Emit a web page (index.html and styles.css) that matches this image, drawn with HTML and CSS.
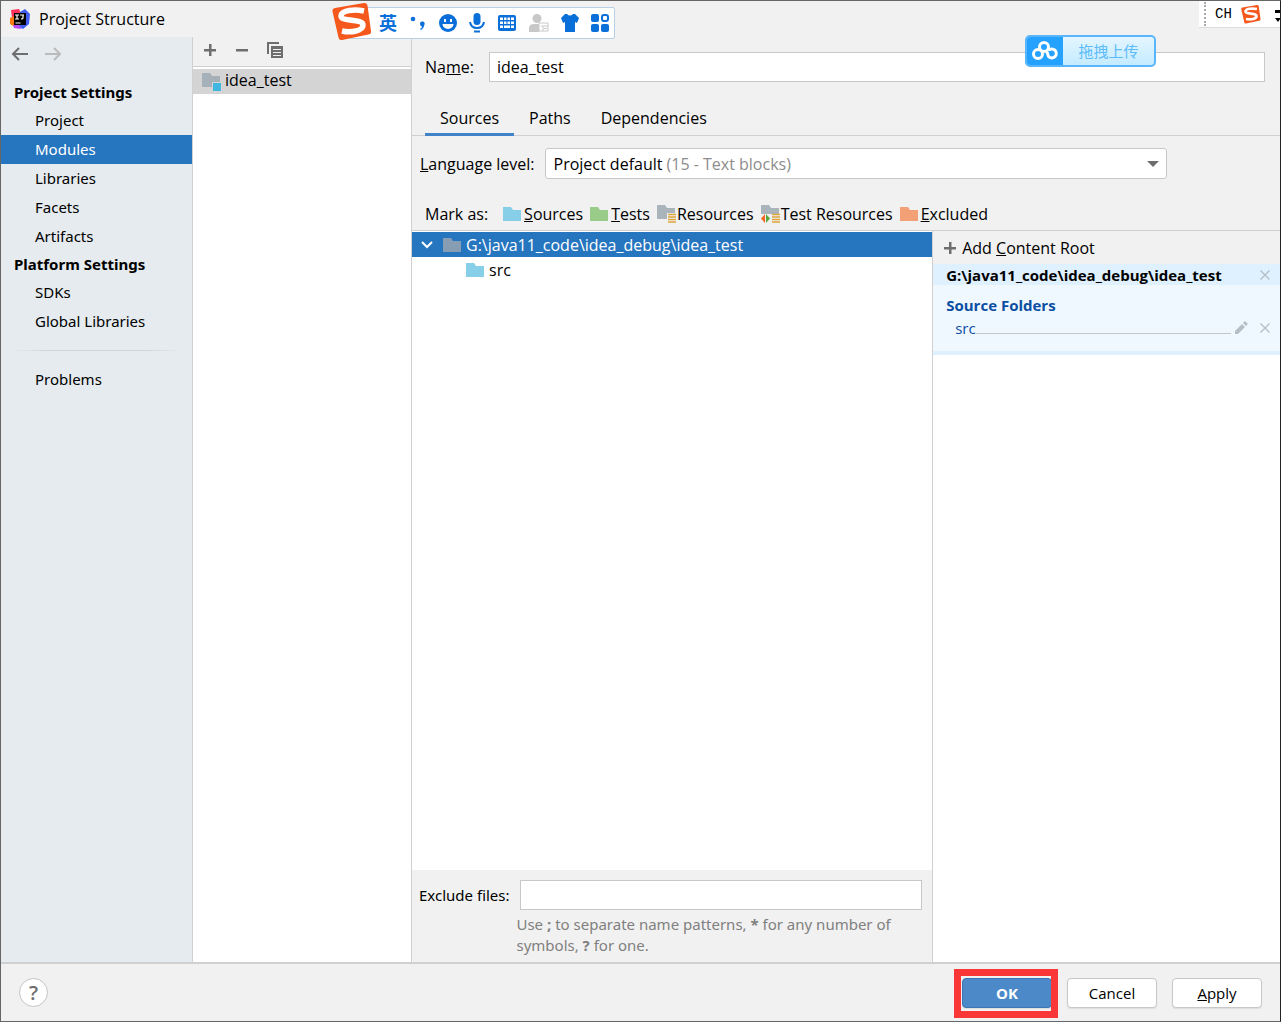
FILE: index.html
```html
<!DOCTYPE html>
<html lang="en">
<head>
  <meta charset="UTF-8" />
  <meta name="viewport" content="width=device-width, initial-scale=1.0" />
  <title>Project Structure</title>
  <link rel="stylesheet" href="styles.css">
</head>
<body>

  <!-- Shared icons -->
  <svg class="sprite" aria-hidden="true">
    <symbol id="folder" viewBox="0 0 18 14"><path d="M0 0h8l2 3h8v11H0z"/></symbol>
    <symbol id="plus" viewBox="0 0 14 14"><path d="M6 1h2.500v5H13v2.500H8.500V13H6V8.500H1V6h5z"/></symbol>
    <symbol id="cross" viewBox="0 0 10 10"><path d="M.5.5l9 9M9.500.5l-9 9" fill="none" stroke="currentColor" stroke-width="1.300"/></symbol>
    <symbol id="arrow" viewBox="0 0 18 14"><path d="M17 7H2M8 1L2 7l6 6" fill="none" stroke="currentColor" stroke-width="2"/></symbol>
    <symbol id="sogou" viewBox="0 0 40 40">
      <path d="M3 7L32 2q3-.5 3.500 2.500L39 30q.5 3-2.500 3.500L10 39q-3 .5-3.500-2.500L.5 10.500Q0 7.500 3 7z" fill="#f4581c"/>
      <path d="M32 10c-9-2-23-1-23 5 0 6 22 2.500 22 9 0 6-12 8-21 6" fill="none" stroke="#fff" stroke-width="5.500"/>
    </symbol>
  </svg>

  <div class="window">
    <header class="titlebar">
      <svg class="logo" viewBox="0 0 20 20" aria-hidden="true">
        <path d="M1 1l8-1 4 9-8 9-5-5 2-4z" fill="#fe315d"/>
        <path d="M0 9l4-2 3 7-4 3-3-2z" fill="#f97a12"/>
        <path d="M10 3l5-3 5 5-1 10-6 5-8-4z" fill="#3f5df5"/>
        <path d="M3 16l6-1 2 5-7-1z" fill="#b74af7"/>
        <path d="M4 4h12v12H4z" fill="#000"/>
        <path d="M5 6h4M7 6v4M5 10h4M10 6h4M13 6v3q0 1-2 1M5.500 14h5" fill="none" stroke="#fff" stroke-width="1.200"/>
      </svg>
      <span>Project Structure</span>
    </header>

    <div class="content">
      <!-- Settings list -->
      <nav class="sidebar">
        <div class="history">
          <button class="icon-btn" aria-label="Back"><svg width="18" height="14"><use href="#arrow"/></svg></button>
          <button class="icon-btn forward" aria-label="Forward" disabled><svg width="18" height="14" viewBox="0 0 18 14"><path d="M1 7h15M10 1l6 6-6 6" fill="none" stroke="currentColor" stroke-width="2"/></svg></button>
        </div>
        <h2>Project Settings</h2>
        <ul>
          <li><a href="#">Project</a></li>
          <li><a href="#" class="active">Modules</a></li>
          <li><a href="#">Libraries</a></li>
          <li><a href="#">Facets</a></li>
          <li><a href="#">Artifacts</a></li>
        </ul>
        <h2>Platform Settings</h2>
        <ul>
          <li><a href="#">SDKs</a></li>
          <li><a href="#">Global Libraries</a></li>
        </ul>
        <hr>
        <ul>
          <li><a href="#">Problems</a></li>
        </ul>
      </nav>

      <!-- Module list -->
      <section class="modules">
        <div class="toolbar">
          <button class="icon-btn" aria-label="Add"><svg width="14" height="14"><use href="#plus"/></svg></button>
          <button class="icon-btn" aria-label="Remove"><svg width="14" height="14" viewBox="0 0 14 14"><path d="M1 6h12v2.500H1z"/></svg></button>
          <button class="icon-btn" aria-label="Copy"><svg width="16" height="16" viewBox="0 0 16 16"><path d="M0 0h12v2H2v10H0z"/><path d="M4 4h12v12H4z"/><path d="M6 7.500h8M6 10.500h8M6 13.500h8" stroke="#f1f1f1" stroke-width="1"/></svg></button>
        </div>
        <a href="#" class="module">
          <svg width="20" height="18" viewBox="0 0 20 18" aria-hidden="true"><path d="M0 0h8l2 3h8v11H0z" fill="#a5b0b8"/><path d="M10 9h10v9H10z" fill="#d4d4d4"/><path d="M11 10h8v8h-8z" fill="#40b6e0"/></svg>
          <span>idea_test</span>
        </a>
      </section>

      <!-- Module editor -->
      <main class="editor">
        <div class="name-row">
          <label for="name">Na<u>m</u>e:</label>
          <input type="text" id="name" value="idea_test">
        </div>

        <div class="tabs" role="tablist">
          <button role="tab" class="tab selected" aria-selected="true">Sources</button>
          <button role="tab" class="tab" aria-selected="false">Paths</button>
          <button role="tab" class="tab" aria-selected="false">Dependencies</button>
        </div>

        <div class="level-row">
          <label for="level"><u>L</u>anguage level:</label>
          <div class="combo">
            <select id="level">
              <option>Project default</option>
            </select>
            <span class="hint">(15 - Text blocks)</span>
            <svg class="caret" width="12" height="6" viewBox="0 0 12 6" aria-hidden="true"><path d="M0 0h12L6 6z"/></svg>
          </div>
        </div>

        <div class="mark-row">
          <span class="mark-label">Mark as:</span>
          <button class="mark"><svg class="blue" width="18" height="14"><use href="#folder"/></svg><span><u>S</u>ources</span></button>
          <button class="mark"><svg class="green" width="18" height="14"><use href="#folder"/></svg><span><u>T</u>ests</span></button>
          <button class="mark tight"><svg width="20" height="18" viewBox="0 0 20 18"><path d="M0 0h8l2 3h8v11H0z" fill="#a9b4bb"/><path d="M10 8h10v10H10z" fill="#f1f1f1"/><path d="M11 9.500h8M11 12h8M11 14.500h8M11 17h8" stroke="#dda740" stroke-width="1.500"/></svg><span>Resources</span></button>
          <button class="mark tight"><svg width="20" height="18" viewBox="0 0 20 18"><path d="M0 0h8l2 3h8v11H0z" fill="#a9b4bb"/><path d="M0 9h20v9H0z" fill="#f1f1f1"/><path d="M4 9v9L0 13.500z" fill="#f26522"/><path d="M5 9v9l4-4.500z" fill="#59a83c"/><path d="M11 9.500h8M11 12h8M11 14.500h8M11 17h8" stroke="#dda740" stroke-width="1.500"/></svg><span>Test Resources</span></button>
          <button class="mark"><svg class="orange" width="18" height="14"><use href="#folder"/></svg><span><u>E</u>xcluded</span></button>
        </div>

        <div class="roots">
          <div class="tree-pane">
            <ul class="tree">
              <li class="root">
                <svg width="12" height="8" viewBox="0 0 12 8" aria-hidden="true"><path d="M1 1l5 5 5-5" fill="none" stroke="#fff" stroke-width="2"/></svg>
                <svg class="grey" width="18" height="14" aria-hidden="true"><use href="#folder"/></svg>
                <span>G:\java11_code\idea_debug\idea_test</span>
              </li>
              <li class="child">
                <svg class="blue" width="18" height="14" aria-hidden="true"><use href="#folder"/></svg>
                <span>src</span>
              </li>
            </ul>
            <div class="exclude">
              <label for="exclude">Exclude files:</label>
              <input type="text" id="exclude">
              <p>Use <b>;</b> to separate name patterns, <b>*</b> for any number of symbols, <b>?</b> for one.</p>
            </div>
          </div>

          <aside class="root-pane">
            <button class="add-root"><svg width="14" height="14"><use href="#plus"/></svg><span>Add <u>C</u>ontent Root</span></button>
            <div class="root-head">
              <strong>G:\java11_code\idea_debug\idea_test</strong>
              <button class="small-btn" aria-label="Remove content root"><svg width="10" height="10"><use href="#cross"/></svg></button>
            </div>
            <div class="folders">
              <h3>Source Folders</h3>
              <div class="folder">
                <a href="#">src</a>
                <span class="line"></span>
                <button class="small-btn" aria-label="Edit properties"><svg width="14" height="14" viewBox="0 0 14 14"><path d="M1 10l7-7 3 3-7 7H1zM9 2l1.500-1.500q.5-.5 1 0l2 2q.5.5 0 1L12 5z" fill="currentColor"/></svg></button>
                <button class="small-btn" aria-label="Remove source folder"><svg width="10" height="10"><use href="#cross"/></svg></button>
              </div>
            </div>
          </aside>
        </div>
      </main>
    </div>

    <footer class="footer">
      <button class="help" aria-label="Help">?</button>
      <div class="actions">
        <button class="btn primary">OK</button>
        <button class="btn">Cancel</button>
        <button class="btn"><u>A</u>pply</button>
      </div>
    </footer>

    <!-- Input method bar -->
    <div class="ime">
      <svg class="ime-logo" width="40" height="40" aria-hidden="true"><use href="#sogou"/></svg>
      <span class="ime-lang">英</span>
      <svg width="18" height="16" viewBox="0 0 18 16"><circle cx="4" cy="4" r="2.300"/><path d="M11 9a2.300 2.300 0 1 1 4.500.5Q15 13 12 15l-1-1q2-1 2-2.500-2-.5-2-2.500z"/></svg>
      <svg width="18" height="18" viewBox="0 0 18 18"><circle cx="9" cy="9" r="9"/><path d="M5 5h2v3H5zM11 5h2v3h-2zM3.500 10h11a5.500 5 0 0 1-11 0z" fill="#fff"/></svg>
      <svg width="16" height="20" viewBox="0 0 16 20"><rect x="4.500" y="0" width="7" height="12" rx="3.500"/><path d="M1 9q1 6 7 6t7-6" fill="none" stroke="currentColor" stroke-width="2"/><path d="M5 17.500h6v2H5z"/></svg>
      <svg width="20" height="16" viewBox="0 0 20 16"><rect x="1" y="0" width="18" height="16" rx="2"/><path d="M3 2.500h3v2.500H3zM7 2.500h2.500v2.500H7zM10.500 2.500H13v2.500h-2.500zM14 2.500h3v2.500h-3zM3 6.500h3v2.500H3zM7 6.500h2.500v2.500H7zM10.500 6.500H13v2.500h-2.500zM14 6.500h3v2.500h-3zM3 10.500h3V13H3zM7 10.500h6V13H7zM14 10.500h3V13h-3z" fill="#fff"/></svg>
      <svg class="ime-off" width="20" height="18" viewBox="0 0 20 18"><circle cx="8" cy="4.500" r="4.500"/><path d="M0 18v-4q0-4 5-4h5v8z"/><path d="M10 9h9v8h-9zM12 12h2v5M14 12h5M15 14.500h3" fill="#fff" stroke="currentColor"/></svg>
      <svg width="18" height="18" viewBox="1 0 18 18"><path d="M5 0h2q3 3 6 0h2l4 4-2 5-2-1v10H5V8L3 9 1 4z"/></svg>
      <svg width="18" height="18" viewBox="0 0 18 18"><rect x="0" y="0" width="8" height="8" rx="2"/><rect x="11" y="1" width="6" height="6" rx="2" fill="none" stroke="currentColor" stroke-width="2"/><rect x="0" y="10" width="8" height="8" rx="2"/><rect x="10" y="10" width="8" height="8" rx="2"/></svg>
    </div>

    <!-- Language bar -->
    <div class="langbar">
      <span class="grip"></span>
      <span class="lang">CH</span>
      <svg width="20" height="20" aria-hidden="true"><use href="#sogou"/></svg>
      <svg class="langbar-menu" width="6" height="12" viewBox="0 0 6 12" aria-hidden="true"><path d="M0 0h6v3H0zM0 8h6l-3 4z"/></svg>
    </div>

    <!-- Drag and drop upload -->
    <button class="upload">
      <span class="upload-icon"><svg width="26" height="22" viewBox="0 0 26 22" fill="none" stroke="#fff" stroke-width="3"><circle cx="12" cy="7" r="4.500"/><circle cx="6" cy="14" r="4.500"/><path d="M14.500 10.500l2 6a4.500 4.500 0 1 0 0-6.200"/></svg></span>
      <span class="upload-text">拖拽上传</span>
    </button>
  </div>

</body>
</html>
```
FILE: styles.css
```css
* {
  box-sizing: border-box;
}

body {
  margin: 0;
  background: #f1f1f1;
  color: #000;
  font-family: "Open Sans", "Noto Sans CJK SC", sans-serif;
  font-size: 16px;
  line-height: 20px;
}

button,
input,
select {
  font: inherit;
  color: inherit;
}

button {
  background: none;
  border: none;
  padding: 0;
  cursor: pointer;
}

a {
  color: inherit;
  text-decoration: none;
}

svg {
  display: block;
  flex: none;
}

ul {
  list-style: none;
  margin: 0;
  padding: 0;
}

.sprite {
  position: absolute;
  width: 0;
  height: 0;
}

.window {
  position: relative;
  display: flex;
  flex-direction: column;
  min-height: 100vh;
  border: 1px solid #666;
  border-right-color: #222;
  overflow: hidden;
}

.titlebar {
  display: flex;
  align-items: center;
  gap: 9px;
  height: 36px;
  padding-left: 9px;
}

.logo {
  width: 20px;
  height: 20px;
}

.content {
  flex: 1;
  display: flex;
}

/* Sidebar */
.sidebar {
  width: 192px;
  background: #e6ebef;
  border-right: 1px solid #d0d0d0;
  font-family: "Noto Sans", sans-serif;
  font-size: 15px;
}

.history {
  display: flex;
  align-items: center;
  gap: 15px;
  height: 34px;
  margin-bottom: 8px;
  padding-left: 10px;
}

.icon-btn {
  color: #6e6e6e;
  fill: #6e6e6e;
}

.icon-btn.forward {
  color: #bbb;
}

.sidebar h2 {
  margin: 0;
  padding-left: 13px;
  font-size: 15px;
  line-height: 27px;
}

.sidebar li a {
  display: block;
  padding-left: 34px;
  line-height: 29px;
}

.sidebar li a.active {
  background: #2675bf;
  color: #fff;
}

.sidebar hr {
  height: 1px;
  margin: 14px 10px;
  border: none;
  background: linear-gradient(to right, transparent, #d4d6d8 20%, #d4d6d8 80%, transparent);
}

/* Module list */
.modules {
  width: 219px;
  background: #fff;
  border-right: 1px solid #d0d0d0;
}

.toolbar {
  display: flex;
  align-items: center;
  gap: 18px;
  height: 30px;
  margin-bottom: 2px;
  padding: 0 10px 3px;
  background: #f1f1f1;
  border-bottom: 1px solid #d0d0d0;
}

.module {
  display: flex;
  align-items: center;
  gap: 3px;
  height: 25px;
  padding: 0 0 3px 9px;
  background: #d4d4d4;
}

.module svg {
  margin-top: 3px;
}

/* Editor */
.editor {
  flex: 1;
  display: flex;
  flex-direction: column;
  min-width: 0;
}

.name-row {
  display: flex;
  align-items: center;
  gap: 15px;
  padding: 15px 15px 0 13px;
}

input[type="text"] {
  flex: 1;
  min-width: 0;
  height: 30px;
  padding: 0 7px;
  background: #fff;
  border: 1px solid #c8c8c8;
  border-radius: 0;
}

.tabs {
  display: flex;
  margin-top: 21px;
  padding-left: 13px;
  border-bottom: 1px solid #d0d0d0;
}

.tab {
  height: 33px;
  margin-bottom: -1px;
  padding: 0 15px;
  border-bottom: 3px solid transparent;
}

.tab.selected {
  border-bottom-color: #4083c9;
}

.level-row {
  display: flex;
  align-items: center;
  gap: 10px;
  padding: 12px 113px 0 8px;
}

.combo {
  flex: 1;
  display: grid;
  align-items: center;
}

.combo > * {
  grid-area: 1 / 1;
}

.combo select {
  width: 100%;
  height: 31px;
  padding: 0 8px;
  appearance: none;
  background: #fff;
  border: 1px solid #c8c8c8;
  border-radius: 3px;
}

.hint {
  margin-left: 122px;
  color: #8c8c8c;
  pointer-events: none;
}

.caret {
  justify-self: end;
  margin-right: 8px;
  fill: #6e6e6e;
  pointer-events: none;
}

.mark-row {
  display: flex;
  align-items: center;
  gap: 7px;
  height: 52px;
  padding: 19px 0 0 13px;
  border-bottom: 1px solid #d0d0d0;
}

.mark-label {
  margin-right: 8px;
}

.mark {
  display: flex;
  align-items: center;
  gap: 3px;
}

.mark.tight {
  gap: 0;
}

.blue {
  fill: #87cfe8;
}

.green {
  fill: #99cc88;
}

.orange {
  fill: #f4a077;
}

.grey {
  fill: #869db3;
}

.roots {
  flex: 1;
  display: flex;
}

.tree-pane {
  flex: 3;
  display: flex;
  flex-direction: column;
  min-width: 0;
}

.tree {
  flex: 1;
  padding-top: 1px;
  background: #fff;
}

.tree li {
  display: flex;
  align-items: center;
  height: 25px;
}

.root {
  gap: 5px;
  padding-left: 9px;
  background: #2675bf;
  color: #fff;
}

.root .grey {
  margin-left: 5px;
}

.child {
  gap: 5px;
  padding-left: 54px;
}

.exclude {
  display: grid;
  grid-template-columns: auto 1fr;
  align-items: center;
  column-gap: 11px;
  padding: 10px 10px 6px 7px;
  font-family: "Noto Sans", sans-serif;
  font-size: 15px;
}

.exclude p {
  grid-column: 2;
  margin: 4px 0 0 -4px;
  line-height: 21px;
  color: #808080;
}

.root-pane {
  flex: 2;
  min-width: 0;
  background: #fff;
  border-left: 1px solid #d0d0d0;
}

.add-root {
  display: flex;
  align-items: center;
  gap: 5px;
  width: 100%;
  height: 33px;
  padding-left: 10px;
  background: #f1f1f1;
  fill: #6e6e6e;
}

.root-head {
  display: flex;
  align-items: center;
  justify-content: space-between;
  height: 21px;
  padding: 0 10px 0 13px;
  background: #dff1ff;
  font-size: 15px;
}

.small-btn {
  color: #b4bec6;
}

.folders {
  height: 70px;
  padding: 10px 10px 0 13px;
  background: #f0f8ff;
  border-bottom: 4px solid #dff1ff;
  color: #0b4ea2;
  font-size: 15px;
}

.folders h3 {
  margin: 0 0 3px;
  font-size: 15px;
}

.folder {
  display: flex;
  align-items: center;
  padding-left: 9px;
}

.folder .line {
  flex: 1;
  align-self: flex-end;
  margin: 0 3px 4px 0;
  border-bottom: 1px solid #c4c8cc;
}

.folder .small-btn + .small-btn {
  margin-left: 12px;
}

/* Footer */
.footer {
  display: flex;
  align-items: center;
  justify-content: space-between;
  height: 59px;
  padding: 0 18px;
  border-top: 2px solid #d0d0d0;
  font-size: 15px;
}

.help {
  width: 29px;
  height: 29px;
  background: #fff;
  border: 1px solid #c4c4c4;
  border-radius: 50%;
  font-size: 20px;
  font-weight: 600;
  color: #6e6e6e;
}

.actions {
  display: flex;
  gap: 15px;
}

.btn {
  position: relative;
  width: 90px;
  height: 30px;
  background: #fff;
  border: 1px solid #c8c8c8;
  border-radius: 4px;
  box-shadow: 0 1px 1px #ddd;
}

.btn.primary {
  background: #4c89c8;
  border-color: #3d75b3;
  color: #fff;
  font-weight: bold;
}

/* Red highlight around the OK button */
.btn.primary::after {
  content: "";
  position: absolute;
  inset: -10px -7px -11px -9px;
  border: 7px solid #fb3636;
}

/* Input method bar */
.ime {
  position: absolute;
  top: 6px;
  left: 348px;
  display: flex;
  align-items: center;
  gap: 12px;
  height: 32px;
  padding-right: 5px;
  background: #fff;
  border: 1px solid #b9cfe6;
  border-radius: 2px;
  color: #0a6fd8;
  fill: #0a6fd8;
}

.ime-logo {
  margin: 0 -5px 4px -18px;
}

.ime-lang {
  font-size: 18px;
  font-weight: bold;
}

.ime-off {
  color: #c8c8c8;
  fill: #c8c8c8;
}

/* Language bar */
.langbar {
  position: absolute;
  top: -1px;
  right: -1px;
  display: flex;
  align-items: center;
  width: 82px;
  height: 28px;
  padding-left: 5px;
  background: #fff;
  border-bottom: 1px solid #ddd;
}

.grip {
  height: 24px;
  margin-right: 9px;
  border-left: 2px dotted #aaa;
}

.lang {
  margin-right: 9px;
  font-family: "Liberation Mono", monospace;
  font-size: 14px;
}

.langbar-menu {
  margin: 4px 0 0 auto;
}

/* Upload button */
.upload {
  position: absolute;
  top: 34px;
  right: 124px;
  display: flex;
  width: 131px;
  height: 32px;
  background: linear-gradient(#e4f6ff, #c4ebff);
  border: 2px solid #5ab6fb;
  border-radius: 5px;
  font-size: 15px;
  overflow: hidden;
}

.upload-icon {
  display: flex;
  align-items: center;
  justify-content: center;
  width: 36px;
  height: 100%;
  background: #25a2ff;
}

.upload-text {
  flex: 1;
  line-height: 28px;
  color: #5dbbfa;
}
```
